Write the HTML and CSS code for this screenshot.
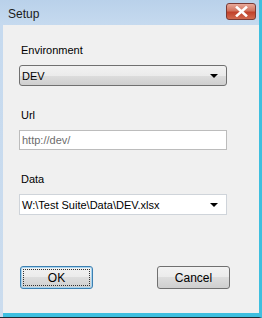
FILE: index.html
```html
<!DOCTYPE html>
<html lang="en">
<head>
    <meta charset="UTF-8">
    <link rel="stylesheet" href="styles.css">
    <title>Setup</title>
</head>
<body>
    <div class="window">
        <div class="titlebar">
            <span class="title">Setup</span>
            <span class="close">
                <svg width="13" height="11" viewBox="0 0 13 11">
                    <path d="M2 1.5 L11 9.5 M11 1.5 L2 9.5" stroke="#fff" stroke-width="2.6" stroke-linecap="square"/>
                </svg>
            </span>
        </div>
        <div class="client">
            <div class="field">
                <label>Environment</label>
                <div class="combo dropdown">
                    <span>DEV</span>
                    <span class="arrow"></span>
                </div>
            </div>
            <div class="field">
                <label>Url</label>
                <div class="textbox">http://dev/</div>
            </div>
            <div class="field">
                <label>Data</label>
                <div class="combo editable">
                    <span>W:\Test Suite\Data\DEV.xlsx</span>
                    <span class="arrow"></span>
                </div>
            </div>
            <div class="buttons">
                <button class="default"><span class="focus">OK</span></button>
                <button>Cancel</button>
            </div>
        </div>
    </div>
</body>
</html>
```
FILE: styles.css
```css
body {
    margin: 0;
    font-family: 'Liberation Sans', Arial, sans-serif;
    font-size: 11px;
    color: #000;
}

.window {
    width: 262px;
    height: 318px;
    box-sizing: border-box;
    display: flex;
    flex-direction: column;
    background: linear-gradient(#b9d1ea, #c6daef 25px, #cbdcee);
    border-right: 3px solid #3ebfdf;
    border-bottom: 1px solid #1d2a33;
}

.titlebar {
    height: 25px;
    display: flex;
    align-items: center;
    justify-content: space-between;
    padding: 0 3px 0 8px;
}

.title {
    font-size: 12px;
    color: #1b1b1b;
    margin-top: 2px;
}

.close {
    width: 30px;
    height: 17px;
    margin-top: -3px;
    box-sizing: border-box;
    border: 1px solid #7a3a34;
    border-radius: 3px;
    background: linear-gradient(#e9a99a, #d0735e 45%, #c1412a 55%, #d16a4f);
    display: flex;
    align-items: center;
    justify-content: center;
}

.client {
    flex: 1;
    background: #f0f0f0;
    margin: 0 0 0 3px;
    border-bottom: 4px solid #3ebfdf;
    padding: 19px 0 0 16px;
}

.field {
    margin-bottom: 23px;
}

.field label {
    display: block;
    margin: 0 0 8px 2px;
    height: 13px;
    line-height: 13px;
}

.combo, .textbox {
    width: 208px;
    height: 21px;
    box-sizing: border-box;
    display: flex;
    align-items: center;
    justify-content: space-between;
    padding: 0 8px 0 2px;
}

.dropdown {
    border: 1px solid #707070;
    border-radius: 3px;
    background: linear-gradient(#f2f2f2, #ebebeb 50%, #dddddd 50%, #cfcfcf);
}

.textbox {
    border: 1px solid #bcbcbc;
    background: #fff;
    color: #6d6d6d;
    height: 20px;
}

.editable {
    border: 1px solid #cfd4da;
    background: #fff;
}

.arrow {
    width: 0;
    height: 0;
    border-left: 4px solid transparent;
    border-right: 4px solid transparent;
    border-top: 4px solid #000;
    margin-top: 1px;
}

.buttons {
    display: flex;
    justify-content: space-between;
    margin: 51px 29px 0 1px;
}

button {
    width: 73px;
    height: 23px;
    padding: 0;
    font-family: inherit;
    font-size: 12px;
    border: 1px solid #707070;
    border-radius: 3px;
    background: linear-gradient(#f2f2f2, #ebebeb 50%, #dddddd 50%, #cfcfcf);
    display: flex;
    align-items: center;
    justify-content: center;
}

.default {
    border-color: #3c7fb1;
    box-shadow: inset 0 0 0 1px #a6d4f0;
}

.focus {
    display: flex;
    align-items: center;
    justify-content: center;
    width: 67px;
    height: 17px;
    border: 1px dotted #333;
    box-sizing: border-box;
}
```
